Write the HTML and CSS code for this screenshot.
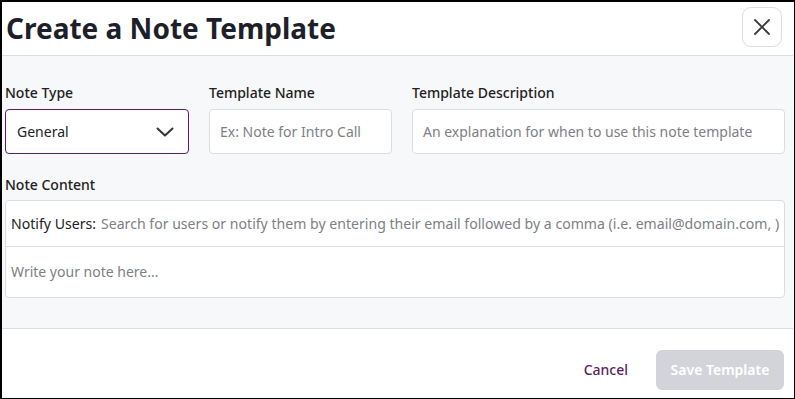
FILE: index.html
```html
<!DOCTYPE html>
<html>
<head>
<meta charset="utf-8">
<link rel="stylesheet" href="styles.css">
</head>
<body>
<div class="frame">
  <div class="modal">
    <header class="head">
      <h1 class="title">Create a Note Template</h1>
      <button class="close" aria-label="Close">
        <svg width="18" height="18" viewBox="0 0 18 18"><path d="M2 2 L16 16 M16 2 L2 16" stroke="#3a3a3a" stroke-width="1.8" stroke-linecap="round"/></svg>
      </button>
    </header>
    <section class="body">
      <div class="row">
        <div class="field">
          <label class="label">Note Type</label>
          <div class="select">
            <span>General</span>
            <svg width="18" height="10" viewBox="0 0 18 10"><path d="M1.5 1.5 L9 8.5 L16.5 1.5" fill="none" stroke="#333" stroke-width="2" stroke-linecap="round" stroke-linejoin="round"/></svg>
          </div>
        </div>
        <div class="field">
          <label class="label">Template Name</label>
          <div class="input"><span class="ph">Ex: Note for Intro Call</span></div>
        </div>
        <div class="field">
          <label class="label">Template Description</label>
          <div class="input"><span class="ph">An explanation for when to use this note template</span></div>
        </div>
      </div>
      <div class="field content-field">
        <label class="label">Note Content</label>
        <div class="content">
          <div class="notify"><span class="nlabel">Notify Users:</span><span class="ph">Search for users or notify them by entering their email followed by a comma (i.e. email@domain.com, )</span></div>
          <div class="write"><span class="ph">Write your note here...</span></div>
        </div>
      </div>
    </section>
    <footer class="foot">
      <button class="cancel">Cancel</button>
      <button class="save">Save Template</button>
    </footer>
  </div>
</div>
</body>
</html>
```
FILE: styles.css
```css
* { box-sizing: border-box; }
html, body { margin: 0; padding: 0; }
body {
  width: 795px;
  height: 399px;
  font-family: "Noto Sans", "Open Sans", sans-serif;
  color: #212529;
  background: #000;
}
.frame {
  width: 795px;
  height: 399px;
  border-top: 2px solid #000;
  border-left: 2px solid #000;
  border-right: 1px solid #000;
  border-bottom: 1px solid #000;
  background: #fff;
}
.modal {
  display: flex;
  flex-direction: column;
  height: 100%;
}
.head {
  height: 54px;
  display: flex;
  align-items: center;
  justify-content: space-between;
  padding: 0 12px 0 4px;
  border-bottom: 1px solid #dcdde0;
  background: #fff;
}
.title {
  margin: 0 0 2px;
  font-size: 28px;
  font-weight: 700;
  color: #1e1f2a;
}
.close {
  width: 40px;
  height: 40px;
  border: 1px solid #dcdde0;
  border-radius: 9px;
  background: #fff;
  display: flex;
  align-items: center;
  justify-content: center;
  padding: 0;
  margin-top: -4px;
}
.body {
  background: #f7f8fa;
  padding: 27px 9px 0 3px;
  height: 273px;
  border-bottom: 1px solid #dcdde0;
}
.row {
  display: grid;
  grid-template-columns: 184px 183px 1fr;
  column-gap: 20px;
}
.field { display: flex; flex-direction: column; }
.label {
  font-size: 14px;
  font-weight: 500;
  color: #212121;
  line-height: 20px;
  margin-bottom: 6px;
}
.select, .input {
  height: 45px;
  border-radius: 4px;
  background: #fff;
  display: flex;
  align-items: center;
  font-size: 14px;
}
.select {
  border: 1px solid #5a1e5c;
  padding: 0 14px 0 11px;
  justify-content: space-between;
  color: #222;
}
.input {
  border: 1px solid #dcdde0;
  padding: 0 10px;
}
.ph { color: #7d7f85; white-space: nowrap; }
.content-field { margin-top: 21px; }
.content-field .label { margin-bottom: 5px; }
.content {
  border: 1px solid #dcdde0;
  border-radius: 4px;
  background: #fff;
}
.notify {
  height: 46px;
  display: flex;
  align-items: center;
  padding: 0 5px;
  border-bottom: 1px solid #dcdde0;
  font-size: 14.1px;
  gap: 5px;
}
.nlabel { color: #222; white-space: nowrap; }
.write {
  height: 50px;
  display: flex;
  align-items: center;
  padding: 0 5px 2px;
  font-size: 14px;
}
.foot {
  flex: 1;
  display: flex;
  align-items: center;
  justify-content: flex-end;
  padding: 12px 10px 0 0;
  gap: 28px;
  background: #fff;
}
.cancel {
  border: 0;
  background: none;
  font-family: inherit;
  font-size: 14px;
  font-weight: 500;
  color: #5a1e5c;
  padding: 0;
}
.save {
  width: 128px;
  height: 40px;
  border: 0;
  border-radius: 6px;
  background: #d2d4d9;
  color: #fff;
  font-family: inherit;
  font-size: 14px;
  font-weight: 600;
}
```
